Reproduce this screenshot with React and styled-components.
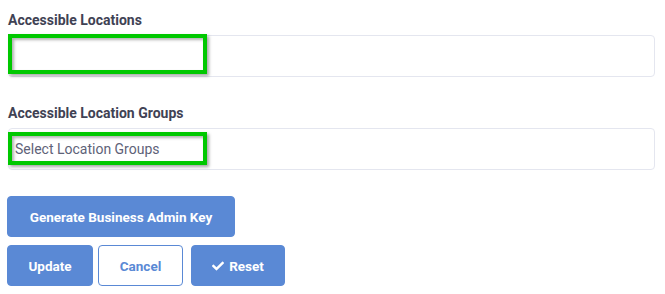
import React from "react";
import styled, { createGlobalStyle } from "styled-components";
import { FaCheck } from "react-icons/fa";

const GlobalStyle = createGlobalStyle`
	body {
		margin: 0;
		background: #fff;
		font-family: Roboto, "Liberation Sans", Arial, sans-serif;
	}
`;

const Page = styled.div`
	padding: 12px 10px 0 7px;
	display: flex;
	flex-direction: column;
`;

const FormGroup = styled.div`
	display: flex;
	flex-direction: column;
	margin-bottom: ${(props) => props.mb || 0}px;
`;

const Label = styled.label`
	font-size: 14px;
	font-weight: 700;
	color: #3f4254;
	line-height: 16px;
	margin-bottom: ${(props) => props.mb || 7}px;
	padding-left: 1px;
`;

const InputBox = styled.div`
	position: relative;
	height: 42px;
	margin-left: 1px;
	border: 1px solid #e4e6ef;
	border-radius: 4px;
	box-sizing: border-box;
	display: flex;
	align-items: center;
	padding-left: 6px;
	font-size: 14px;
	color: #5e6278;
`;

// green highlight drawn over the field (annotation)
const Highlight = styled.div`
	position: absolute;
	left: -1px;
	top: ${(props) => props.top}px;
	width: 199px;
	height: ${(props) => props.h}px;
	border: 4px solid #00c800;
	box-sizing: border-box;
	box-shadow: 2px 2px 3px rgba(0, 0, 0, 0.35), inset 2px 2px 3px rgba(0, 0, 0, 0.3);
	pointer-events: none;
`;

const Placeholder = styled.span`
	position: relative;
	z-index: 1;
`;

const ButtonRow = styled.div`
	display: flex;
	margin-bottom: ${(props) => props.mb || 0}px;
`;

const Button = styled.button`
	height: 41px;
	width: ${(props) => props.w}px;
	margin-right: ${(props) => props.mr || 0}px;
	border-radius: 4px;
	border: 1px solid #5a89d5;
	background: ${(props) => (props.outline ? "#fff" : "#5a89d5")};
	color: ${(props) => (props.outline ? "#5a89d5" : "#fff")};
	font-family: Roboto, "Liberation Sans", Arial, sans-serif;
	font-size: 13.5px;
	font-weight: 700;
	display: inline-flex;
	align-items: center;
	justify-content: center;
	gap: 5px;
	padding: 0;
	cursor: pointer;
`;

export default function App() {
	return (
		<>
			<GlobalStyle />
			<Page>
				<FormGroup mb={28}>
					<Label>Accessible Locations</Label>
					<InputBox>
						<Highlight top={-2} h={40} />
					</InputBox>
				</FormGroup>
				<FormGroup mb={26}>
					<Label>Accessible Location Groups</Label>
					<InputBox>
						<Highlight top={3} h={33} />
						<Placeholder>Select Location Groups</Placeholder>
					</InputBox>
				</FormGroup>
				<ButtonRow mb={8}>
					<Button w={228}>Generate Business Admin Key</Button>
				</ButtonRow>
				<ButtonRow>
					<Button w={86} mr={5}>Update</Button>
					<Button w={85} mr={8} outline>Cancel</Button>
					<Button w={94}>
						<FaCheck size={12} />
						Reset
					</Button>
				</ButtonRow>
			</Page>
		</>
	);
}
